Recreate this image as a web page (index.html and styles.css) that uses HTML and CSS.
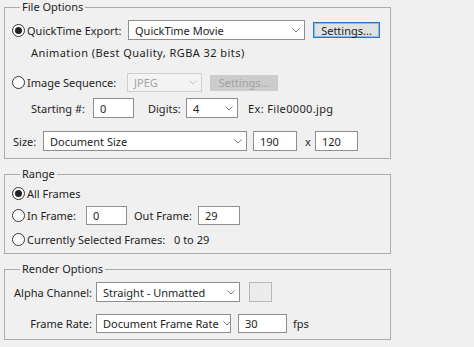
FILE: index.html
```html
<!DOCTYPE html>
<html>
<head>
<meta charset="utf-8">
<link rel="stylesheet" href="styles.css">
</head>
<body>
<div class="dialog">
  <fieldset class="group group-file">
    <legend>File Options</legend>
    <div class="row r1">
      <span class="radio on w-qtlabel"><span class="dot"></span>QuickTime Export:</span>
      <div class="select w-qt"><span class="val">QuickTime Movie</span><svg class="chev" width="8" height="5" viewBox="0 0 8 5"><polyline points="0.5,0.5 4,4 7.5,0.5" fill="none" stroke="#7a7a7a" stroke-width="1"/></svg></div>
      <button class="btn default b-set">Settings...</button>
    </div>
    <div class="row r2 indent wide">Animation (Best Quality, RGBA 32 bits)</div>
    <div class="row r3">
      <span class="radio w-seqlabel"><span class="dot"></span>Image Sequence:</span>
      <div class="select disabled w-jpeg"><span class="val">JPEG</span><svg class="chev" width="8" height="5" viewBox="0 0 8 5"><polyline points="0.5,0.5 4,4 7.5,0.5" fill="none" stroke="#c4c4c4" stroke-width="1"/></svg></div>
      <button class="btn disabled b-set2">Settings...</button>
    </div>
    <div class="row r4 indent">
      <span class="lbl w-start">Starting #:</span>
      <div class="input w-startin">0</div>
      <span class="lbl w-digits">Digits:</span>
      <div class="select w-dig"><span class="val">4</span><svg class="chev" width="8" height="5" viewBox="0 0 8 5"><polyline points="0.5,0.5 4,4 7.5,0.5" fill="none" stroke="#7a7a7a" stroke-width="1"/></svg></div>
      <span class="lbl ex">Ex: File0000.jpg</span>
    </div>
    <div class="row r5">
      <span class="lbl w-size">Size:</span>
      <div class="select w-sizesel"><span class="val">Document Size</span><svg class="chev" width="8" height="5" viewBox="0 0 8 5"><polyline points="0.5,0.5 4,4 7.5,0.5" fill="none" stroke="#7a7a7a" stroke-width="1"/></svg></div>
      <div class="input w-dimw">190</div>
      <span class="lbl w-x">x</span>
      <div class="input w-dimh">120</div>
    </div>
  </fieldset>

  <fieldset class="group group-range">
    <legend>Range</legend>
    <div class="row rr1">
      <span class="radio on"><span class="dot"></span>All Frames</span>
    </div>
    <div class="row rr2">
      <span class="radio w-inlabel"><span class="dot"></span>In Frame:</span>
      <div class="input w-in">0</div>
      <span class="lbl w-out">Out Frame:</span>
      <div class="input w-outin">29</div>
    </div>
    <div class="row rr3">
      <span class="radio w-curlabel"><span class="dot"></span>Currently Selected Frames:</span>
      <span class="lbl">0 to 29</span>
    </div>
  </fieldset>

  <fieldset class="group group-render">
    <legend>Render Options</legend>
    <div class="row ro1">
      <span class="lbl rlabel">Alpha Channel:</span>
      <div class="select w-alpha"><span class="val">Straight - Unmatted</span><svg class="chev" width="8" height="5" viewBox="0 0 8 5"><polyline points="0.5,0.5 4,4 7.5,0.5" fill="none" stroke="#7a7a7a" stroke-width="1"/></svg></div>
      <div class="swatch"></div>
    </div>
    <div class="row ro2">
      <span class="lbl rlabel">Frame Rate:</span>
      <div class="select w-rate"><span class="val">Document Frame Rate</span><svg class="chev" width="8" height="5" viewBox="0 0 8 5"><polyline points="0.5,0.5 4,4 7.5,0.5" fill="none" stroke="#7a7a7a" stroke-width="1"/></svg></div>
      <div class="input w-fps">30</div>
      <span class="lbl fps">fps</span>
    </div>
  </fieldset>
</div>
</body>
</html>
```

FILE: styles.css
```css
* { box-sizing: border-box; }
html, body { margin: 0; padding: 0; }
body {
  width: 474px;
  height: 347px;
  overflow: hidden;
  background: #f0f0f0;
  font-family: "Noto Sans", "Open Sans", sans-serif;
  font-size: 11px;
  color: #1e1e1e;
}
.dialog {
  padding-left: 4px;
}
.group {
  width: 387px;
  margin: 0;
  border: 1px solid #ababab;
  padding: 0 0 0 7px;
  min-width: 0;
}
.group legend {
  margin-left: 8px;
  padding: 0 2px;
  line-height: 14px;
  height: 14px;
}
.group-file { padding-top: 6px; padding-bottom: 7px; }
.group-range { margin-top: 8px; padding-top: 4px; padding-bottom: 6px; }
.group-render { margin-top: 8px; padding-top: 6px; padding-bottom: 6px; }

.row {
  display: flex;
  align-items: center;
  white-space: nowrap;
}
.indent { padding-left: 19px; }
.wide { letter-spacing: 0.45px; }
.r1 { height: 20px; }
.r2 { height: 16px; margin-top: 4px; }
.r3 { height: 19px; margin-top: 13px; }
.r4 { height: 20px; margin-top: 6px; }
.r5 { height: 20px; margin-top: 13px; padding-left: 1px; }
.rr1 { height: 16px; }
.rr2 { height: 19px; margin-top: 5px; }
.rr3 { height: 16px; margin-top: 6px; }
.ro1 { height: 20px; }
.ro2 { height: 19px; margin-top: 12px; }

.radio {
  display: flex;
  align-items: center;
  flex: none;
}
.radio .dot {
  width: 13px;
  height: 13px;
  border: 1px solid #333;
  border-radius: 50%;
  background: #fff;
  margin-right: 2px;
  display: flex;
  align-items: center;
  justify-content: center;
  flex: none;
}
.radio.on .dot::after {
  content: "";
  width: 7px;
  height: 7px;
  border-radius: 50%;
  background: #222;
}
.lbl { flex: none; }

.select, .input {
  height: 100%;
  background: #fff;
  border: 1px solid #8f8f8f;
  display: flex;
  align-items: center;
  flex: none;
  padding-left: 6px;
}
.select .val { flex: 1; }
.select .chev { flex: none; margin-right: 4px; margin-left: 4px; }
.select.disabled {
  background: #f3f3f3;
  border-color: #cfcfcf;
  color: #a3a3a3;
}
.btn {
  font: inherit;
  color: inherit;
  margin: 0;
  padding: 0;
  flex: none;
  display: flex;
  align-items: center;
  justify-content: center;
}
.btn.default {
  background: #e1e1e1;
  border: 1px solid #2b77c6;
  box-shadow: inset 0 0 0 1px #8ab8e6;
}
.btn.disabled {
  background: #cccccc;
  border: 1px solid #cccccc;
  color: #a3a3a3;
}

/* File options */
.w-qtlabel { width: 116px; }
.w-qt { width: 177px; }
.b-set { width: 67px; height: 16px; margin-left: 8px; }
.w-seqlabel { width: 115px; }
.w-jpeg { width: 75px; }
.b-set2 { width: 68px; height: 16px; margin-left: 8px; }
.w-start { width: 62px; }
.w-startin { width: 41px; }
.w-digits { width: 38px; margin-left: 14px; }
.w-dig { width: 52px; }
.ex { margin-left: 10px; letter-spacing: 0.35px; }
.w-size { width: 30px; }
.w-sizesel { width: 204px; }
.w-dimw { width: 44px; margin-left: 6px; }
.w-x { width: 10px; margin-left: 8px; }
.w-dimh { width: 43px; }

/* Range */
.w-inlabel { width: 74px; }
.w-in { width: 41px; }
.w-out { width: 64px; margin-left: 7px; }
.w-outin { width: 42px; }
.w-curlabel { width: 162px; }

/* Render */
.rlabel { width: 80px; text-align: right; margin-right: 4px; }
.w-alpha { width: 144px; }
.swatch {
  width: 23px;
  height: 20px;
  margin-left: 9px;
  border: 1px solid #b9b9b9;
  background: #ececec;
  flex: none;
}
.w-rate { width: 135px; }
.w-fps { width: 49px; margin-left: 7px; }
.fps { margin-left: 6px; }
```
